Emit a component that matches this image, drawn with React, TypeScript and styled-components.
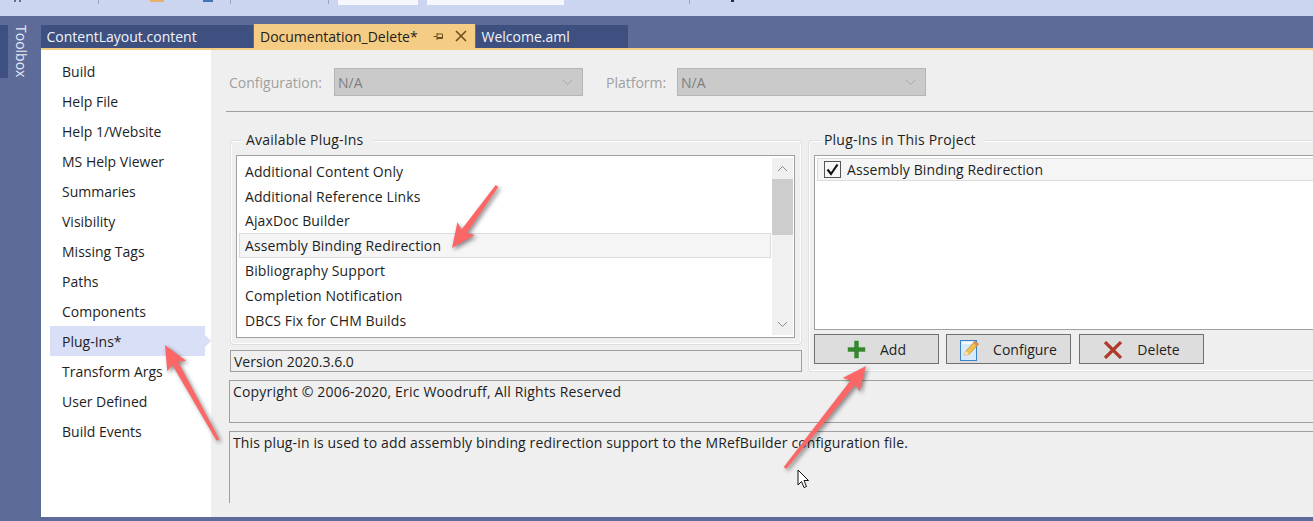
import styled, { createGlobalStyle } from "styled-components";

const GlobalStyle = createGlobalStyle`
  html, body {
    margin: 0;
    padding: 0;
    width: 1313px;
    height: 521px;
    overflow: hidden;
    background: #5c6b98;
  }
  * {
    box-sizing: border-box;
  }
`;

const available = [
  "Additional Content Only",
  "Additional Reference Links",
  "AjaxDoc Builder",
  "Assembly Binding Redirection",
  "Bibliography Support",
  "Completion Notification",
  "DBCS Fix for CHM Builds",
];

const pages = [
  "Build",
  "Help File",
  "Help 1/Website",
  "MS Help Viewer",
  "Summaries",
  "Visibility",
  "Missing Tags",
  "Paths",
  "Components",
  "Plug-Ins*",
  "Transform Args",
  "User Defined",
  "Build Events",
];

// builds the outline of a callout arrow from its tail to its tip
const arrowPoints = (x1: number, y1: number, x2: number, y2: number) => {
  const len = Math.hypot(x2 - x1, y2 - y1);
  const ux = (x2 - x1) / len;
  const uy = (y2 - y1) / len;
  const nx = -uy;
  const ny = ux;
  const neckX = x2 - ux * 21;
  const neckY = y2 - uy * 21;
  const p = (x: number, y: number, w: number) => `${x + nx * w},${y + ny * w}`;
  return [
    p(x1, y1, 1.6),
    p(neckX, neckY, 3.2),
    p(neckX - ux * 3, neckY - uy * 3, 10.8),
    p(x2, y2, 0),
    p(neckX - ux * 3, neckY - uy * 3, -10.8),
    p(neckX, neckY, -3.2),
    p(x1, y1, -1.6),
  ].join(" ");
};

const Page = styled.div`
  position: relative;
  width: 1313px;
  height: 521px;
  overflow: hidden;
  display: flex;
  flex-direction: column;
  background: #5c6b98;
  font-family: "Open Sans", "Noto Sans", sans-serif;
  font-size: 14px;
  color: #1e1e1e;
`;

const Toolbar = styled.div`
  height: 16px;
  flex-shrink: 0;
  background: #ccd5f0;
  display: flex;
  align-items: flex-start;
`;

const ToolbarMark = styled.span<{ $left: number; $width: number; $height: number; $color: string }>`
  margin-left: ${(p) => p.$left}px;
  width: ${(p) => p.$width}px;
  height: ${(p) => p.$height}px;
  background: ${(p) => p.$color};
  flex-shrink: 0;
`;

const Main = styled.div`
  flex: 1;
  display: flex;
  min-height: 0;
  padding-bottom: 4px;
`;

const ToolRail = styled.div`
  width: 41px;
  flex-shrink: 0;
  display: flex;
  padding-top: 9px;
  align-items: flex-start;
`;

const ToolStripe = styled.div`
  width: 8px;
  height: 53px;
  background: #3d5080;
`;

const ToolLabel = styled.div`
  writing-mode: vertical-rl;
  margin-left: 5px;
  font-size: 14px;
  line-height: 17px;
  color: #e6eaf5;
`;

const Workspace = styled.div`
  flex: 1;
  min-width: 0;
  display: flex;
  flex-direction: column;
`;

const TabStrip = styled.div`
  height: 34px;
  flex-shrink: 0;
  display: flex;
  align-items: flex-end;
  padding-top: 8px;
  border-bottom: 2px solid #f5cc84;
`;

const Tab = styled.div<{ $width: number; $active?: boolean }>`
  width: ${(p) => p.$width}px;
  height: ${(p) => (p.$active ? 24 : 23)}px;
  margin-right: 1px;
  padding-left: ${(p) => (p.$active ? 6 : 5.5)}px;
  display: flex;
  align-items: center;
  background: ${(p) => (p.$active ? "#f5cc84" : "#3d5080")};
  color: ${(p) => (p.$active ? "#1e1e1e" : "#f2f4fa")};
`;

const TabTools = styled.div`
  margin-left: auto;
  margin-right: 8px;
  display: flex;
  align-items: center;
  gap: 11px;
`;

const Panel = styled.div`
  flex: 1;
  min-height: 0;
  display: flex;
`;

const Sidebar = styled.nav`
  width: 170px;
  flex-shrink: 0;
  background: #fff;
  padding: 6px 6px 0 9px;
`;

const NavItem = styled.div<{ $active?: boolean }>`
  position: relative;
  height: 30px;
  padding-left: 12px;
  display: flex;
  align-items: center;
  background: ${(p) => (p.$active ? "#d9dff7" : "transparent")};

  ${(p) =>
    p.$active &&
    `&::after {
      content: "";
      position: absolute;
      left: 100%;
      top: 9px;
      border-style: solid;
      border-width: 6px 0 6px 6px;
      border-color: transparent transparent transparent #d9dff7;
    }`}
`;

const Content = styled.div`
  flex: 1;
  min-width: 0;
  background: #efefef;
  padding: 18px 0 0 15px;
  display: flex;
  flex-direction: column;
`;

const ConfigRow = styled.div`
  display: flex;
  align-items: center;
  height: 28px;
  padding-left: 3px;
`;

const ConfigLabel = styled.span<{ $width: number }>`
  width: ${(p) => p.$width}px;
  color: #a0a0a0;
`;

const ConfigSelect = styled.div`
  width: 249px;
  height: 28px;
  margin-right: 23px;
  padding: 0 9px 0 3px;
  display: flex;
  align-items: center;
  justify-content: space-between;
  background: #cacaca;
  border: 1px solid #b5b5b5;
  color: #7f7f7f;
`;

const Divider = styled.div`
  height: 1px;
  margin-top: 15px;
  background: #a0a0a0;
`;

const Groups = styled.div`
  display: flex;
  gap: 6px;
  margin: 20px -40px 0 4px;
`;

const LeftColumn = styled.div`
  width: 572px;
  flex-shrink: 0;
  display: flex;
  flex-direction: column;
`;

const Group = styled.fieldset<{ $grow?: boolean }>`
  margin: 0;
  min-width: 0;
  padding: 7px 6px 6px 5px;
  border: 1px solid #dcdfe3;
  border-radius: 4px;
  box-shadow: inset 0 0 0 1px #fff;
  ${(p) => p.$grow && "flex: 1;"}
`;

const GroupTitle = styled.legend`
  margin-left: 7px;
  padding: 0 9px 0 3px;
  height: 16px;
  line-height: 16px;
  letter-spacing: 0.2px;
  background: #efefef;
  position: relative;
`;

const ListBox = styled.div<{ $height: number }>`
  position: relative;
  height: ${(p) => p.$height}px;
  padding: 2px;
  background: #fff;
  border: 1px solid #a0a0a0;
`;

const PluginList = styled.div`
  padding-top: 1px;
`;

const PluginRow = styled.div<{ $selected?: boolean }>`
  height: 24.8px;
  width: 532px;
  padding-left: 6px;
  display: flex;
  align-items: center;
  letter-spacing: 0.1px;
  background: ${(p) => (p.$selected ? "#f5f5f5" : "transparent")};
  outline: ${(p) => (p.$selected ? "1px solid #dcdcdc" : "none")};
  outline-offset: -1px;
`;

const ScrollTrack = styled.div`
  position: absolute;
  top: 2px;
  right: 1px;
  bottom: 2px;
  width: 21px;
  background: #f0f0f0;
  display: flex;
  flex-direction: column;
  align-items: center;
  justify-content: space-between;
  padding: 7px 0;
`;

const ScrollThumb = styled.div`
  position: absolute;
  top: 21px;
  left: 0;
  width: 100%;
  height: 56px;
  background: #cdcdcd;
`;

const ProjectRow = styled.div`
  height: 23px;
  padding-left: 6px;
  display: flex;
  align-items: center;
  gap: 6px;
  letter-spacing: 0.1px;
  background: #f5f5f5;
  border: 1px solid #dcdcdc;
  border-right: none;
`;

const ButtonRow = styled.div`
  display: flex;
  gap: 7px;
  margin-top: 4px;

  & > :last-child {
    margin-left: 1px;
  }
`;

const ActionButton = styled.button`
  width: 125px;
  height: 30px;
  padding: 1px 0 0;
  display: flex;
  align-items: center;
  justify-content: center;
  gap: 14px;
  background: #ddd;
  border: 1px solid #707070;
  font: inherit;
  color: #1e1e1e;
`;

const InfoBox = styled.div<{ $height: number; $spacing: number; $open?: boolean }>`
  height: ${(p) => p.$height}px;
  margin: 8px -10px 0 3px;
  padding: 1px 3px;
  border: 1px solid #a0a0a0;
  ${(p) => p.$open && "border-bottom: none;"}
  letter-spacing: ${(p) => p.$spacing}px;
  white-space: nowrap;
`;

const VersionBox = styled.div`
  height: 22px;
  margin-top: 5px;
  padding: 0 3px;
  display: flex;
  align-items: center;
  border: 1px solid #a0a0a0;
`;

const Overlay = styled.svg`
  position: absolute;
  left: 0;
  top: 0;
  pointer-events: none;
`;

const Chevron = ({ up, color = "#8a8a8a" }: { up?: boolean; color?: string }) => (
  <svg width="11" height="7" viewBox="0 0 11 7">
    <path d={up ? "M1 6 L5.5 1.5 L10 6" : "M1 1 L5.5 5.5 L10 1"} fill="none" stroke={color} strokeWidth="1" />
  </svg>
);

const PinIcon = () => (
  <svg width="11" height="11" viewBox="0 0 11 11">
    <path d="M0.5 5.5 H4 M4 2 V9 M4 3 H9.5 V7.5 H4 M4 6.5 H9.5" fill="none" stroke="#6b4f1e" strokeWidth="1" />
  </svg>
);

const CloseIcon = () => (
  <svg width="12" height="12" viewBox="0 0 12 12">
    <path d="M1 1 L11 11 M11 1 L1 11" fill="none" stroke="#6b4f1e" strokeWidth="1.6" />
  </svg>
);

const CheckBox = () => (
  <svg width="17" height="17" viewBox="0 0 17 17">
    <rect x="0.5" y="0.5" width="16" height="16" fill="#f7f7f7" stroke="#555" />
    <path d="M3.5 8.5 L7 13 L13.5 3.5" fill="none" stroke="#111" strokeWidth="2.2" />
  </svg>
);

const PlusIcon = () => (
  <svg width="19" height="19" viewBox="0 0 19 19">
    <path d="M7 0.5 H12 V7 H18.5 V12 H12 V18.5 H7 V12 H0.5 V7 H7 Z" fill="#36862f" stroke="#cfe5cb" strokeWidth="0.6" />
  </svg>
);

const ConfigureIcon = () => (
  <svg width="19" height="22" viewBox="0 0 19 22">
    <rect x="0.5" y="1.5" width="16" height="20" fill="#d8eafa" stroke="#3f7fc4" />
    <rect x="2" y="3" width="13" height="2" fill="#f5f9fd" />
    <path d="M4 16 L6 12 L15 2 L18.5 5 L9 15.5 Z" fill="#f0c04f" stroke="#c08a2a" strokeWidth="0.7" />
    <path d="M15 2 L18.5 5 L17 7 L13.5 4 Z" fill="#d98a5a" />
    <path d="M4 16 L6 12 L9 15.5 Z" fill="#fbe7c0" />
  </svg>
);

const DeleteIcon = () => (
  <svg width="20" height="18" viewBox="0 0 20 18">
    <path d="M2 1 L18 17 M18 1 L2 17" fill="none" stroke="#b03a2a" strokeWidth="3.2" />
  </svg>
);

export default function App() {
  return (
    <Page>
      <GlobalStyle />
      <Toolbar>
        <ToolbarMark $left={14} $width={2} $height={2} $color="#6a6f80" />
        <ToolbarMark $left={3} $width={2} $height={2} $color="#6a6f80" />
        <ToolbarMark $left={77} $width={1} $height={4} $color="#9aa3bd" />
        <ToolbarMark $left={51} $width={14} $height={2} $color="#e8b06a" />
        <ToolbarMark $left={39} $width={10} $height={2} $color="#3f74b5" />
        <ToolbarMark $left={17} $width={1} $height={4} $color="#9aa3bd" />
        <ToolbarMark $left={97} $width={1} $height={4} $color="#9aa3bd" />
        <ToolbarMark $left={9} $width={80} $height={5} $color="#f5f7fd" />
        <ToolbarMark $left={9} $width={137} $height={5} $color="#f5f7fd" />
        <ToolbarMark $left={125} $width={1} $height={4} $color="#9aa3bd" />
        <ToolbarMark $left={41} $width={3} $height={2} $color="#222a44" />
      </Toolbar>
      <Main>
        <ToolRail>
          <ToolStripe />
          <ToolLabel>Toolbox</ToolLabel>
        </ToolRail>
        <Workspace>
          <TabStrip>
            <Tab $width={212}>ContentLayout.content</Tab>
            <Tab $width={221} $active>
              Documentation_Delete*
              <TabTools>
                <PinIcon />
                <CloseIcon />
              </TabTools>
            </Tab>
            <Tab $width={152}>Welcome.aml</Tab>
          </TabStrip>
          <Panel>
            <Sidebar>
              {pages.map((name) => (
                <NavItem key={name} $active={name === "Plug-Ins*"}>
                  {name}
                </NavItem>
              ))}
            </Sidebar>
            <Content>
              <ConfigRow>
                <ConfigLabel $width={105}>Configuration:</ConfigLabel>
                <ConfigSelect>
                  N/A
                  <Chevron color="#a8a8a8" />
                </ConfigSelect>
                <ConfigLabel $width={71}>Platform:</ConfigLabel>
                <ConfigSelect>
                  N/A
                  <Chevron color="#a8a8a8" />
                </ConfigSelect>
              </ConfigRow>
              <Divider />
              <Groups>
                <LeftColumn>
                  <Group>
                    <GroupTitle>Available Plug-Ins</GroupTitle>
                    <ListBox $height={183}>
                      <PluginList>
                        {available.map((name) => (
                          <PluginRow key={name} $selected={name === "Assembly Binding Redirection"}>
                            {name}
                          </PluginRow>
                        ))}
                      </PluginList>
                      <ScrollTrack>
                        <Chevron up />
                        <ScrollThumb />
                        <Chevron />
                      </ScrollTrack>
                    </ListBox>
                  </Group>
                  <VersionBox>Version 2020.3.6.0</VersionBox>
                </LeftColumn>
                <Group $grow>
                  <GroupTitle>Plug-Ins in This Project</GroupTitle>
                  <ListBox $height={175}>
                    <ProjectRow>
                      <CheckBox />
                      Assembly Binding Redirection
                    </ProjectRow>
                  </ListBox>
                  <ButtonRow>
                    <ActionButton>
                      <PlusIcon />
                      Add
                    </ActionButton>
                    <ActionButton>
                      <ConfigureIcon />
                      Configure
                    </ActionButton>
                    <ActionButton>
                      <DeleteIcon />
                      Delete
                    </ActionButton>
                  </ButtonRow>
                </Group>
              </Groups>
              <InfoBox $height={43} $spacing={0.18}>
                Copyright © 2006-2020, Eric Woodruff, All Rights Reserved
              </InfoBox>
              <InfoBox $height={72} $spacing={0.13} $open>
                This plug-in is used to add assembly binding redirection support to the MRefBuilder configuration file.
              </InfoBox>
            </Content>
          </Panel>
        </Workspace>
      </Main>
      <Overlay width="1313" height="521" viewBox="0 0 1313 521">
        <g fill="#fb6767" style={{ filter: "drop-shadow(2px 2px 2px rgba(0,0,0,0.45))" }}>
          <polygon points={arrowPoints(497, 186, 452, 248)} />
          <polygon points={arrowPoints(218, 440, 165, 345)} />
          <polygon points={arrowPoints(785, 468, 866, 366)} />
        </g>
        <path
          d="M798 470 V485 L801.5 481.5 L804 487.5 L806.5 486.5 L804 480.5 L808.5 480.5 Z"
          fill="#fff"
          stroke="#111"
          strokeWidth="1"
        />
      </Overlay>
    </Page>
  );
}
